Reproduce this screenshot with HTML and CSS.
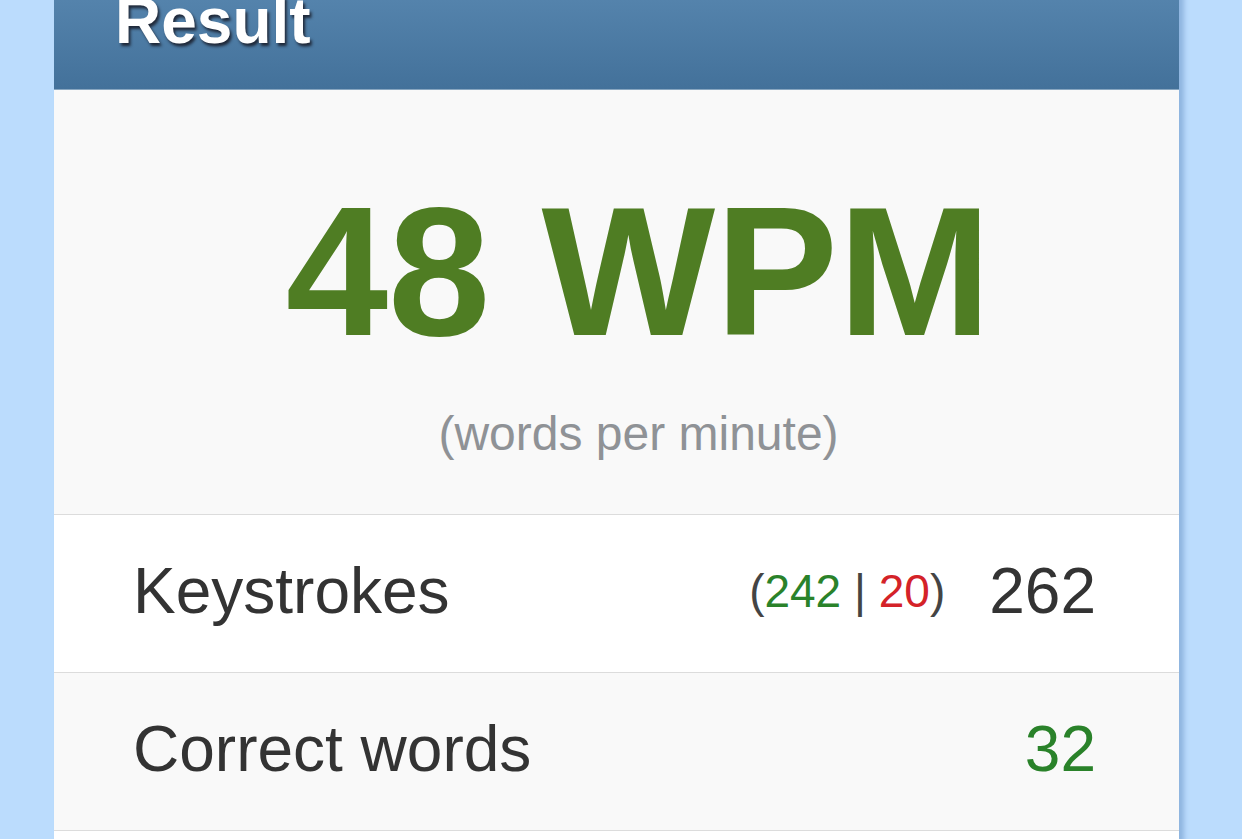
FILE: index.html
```html
<!DOCTYPE html>
<html lang="en">
<head>
<meta charset="utf-8">
<title>Result</title>
<link rel="stylesheet" href="styles.css">
</head>
<body>
<div class="panel">
  <div class="panel-heading"><h2 class="title">Result</h2></div>
  <div class="summary">
    <div class="wpm">48 WPM</div>
    <div class="wpm-note">(words per minute)</div>
  </div>
  <ul class="stats">
    <li class="row">
      <span class="label">Keystrokes</span>
      <span class="values">
        <span class="detail">(<span class="ok">242</span> | <span class="bad">20</span>)</span>
        <span class="value">262</span>
      </span>
    </li>
    <li class="row alt">
      <span class="label">Correct words</span>
      <span class="values"><span class="value ok">32</span></span>
    </li>
    <li class="row empty"></li>
  </ul>
</div>
</body>
</html>
```
FILE: styles.css
```css
html, body {
  margin: 0;
  padding: 0;
  height: 100%;
  overflow: hidden;
}
body {
  background: #bbdcfd;
  font-family: "Liberation Sans", Arial, sans-serif;
  color: #333;
}
.panel {
  margin-left: 54px;
  width: 1125px;
  margin-top: -20px;
  background: #f9f9f9;
  box-shadow: 5px 0 5px rgba(60, 110, 170, 0.35);
}
.panel-heading {
  background: linear-gradient(#5887b0, #43719a);
  border-bottom: 1px solid #88a6c0;
  padding: 9px 62px 36px 61px;
}
.title {
  margin: 0;
  font-size: 64px;
  line-height: 1;
  font-weight: bold;
  color: #fff;
  text-shadow: 2px 3px 3px rgba(20, 20, 30, 0.8);
}
.summary {
  text-align: center;
  padding: 89px 0 56px 44px;
  border-bottom: 1px solid #dcdcdc;
}
.wpm {
  font-size: 184px;
  line-height: 1;
  font-weight: bold;
  color: #4f7d23;
}
.wpm-note {
  margin-top: 47px;
  font-size: 48px;
  line-height: 1;
  color: #8f9296;
}
.stats {
  list-style: none;
  margin: 0;
  padding: 0;
}
.row {
  display: flex;
  justify-content: space-between;
  align-items: center;
  padding: 44px 83px 49px 79px;
  background: #fff;
  border-bottom: 1px solid #dcdcdc;
}
.row.alt {
  background: #f9f9f9;
}
.row.empty {
  height: 64px;
}
.label {
  font-size: 64px;
  line-height: 1;
}
.values {
  display: flex;
  align-items: center;
}
.detail {
  font-size: 46px;
  line-height: 1;
  color: #444;
  margin-right: 44px;
}
.value {
  font-size: 64px;
  line-height: 1;
}
.ok {
  color: #2a822a;
}
.bad {
  color: #d42228;
}
```
